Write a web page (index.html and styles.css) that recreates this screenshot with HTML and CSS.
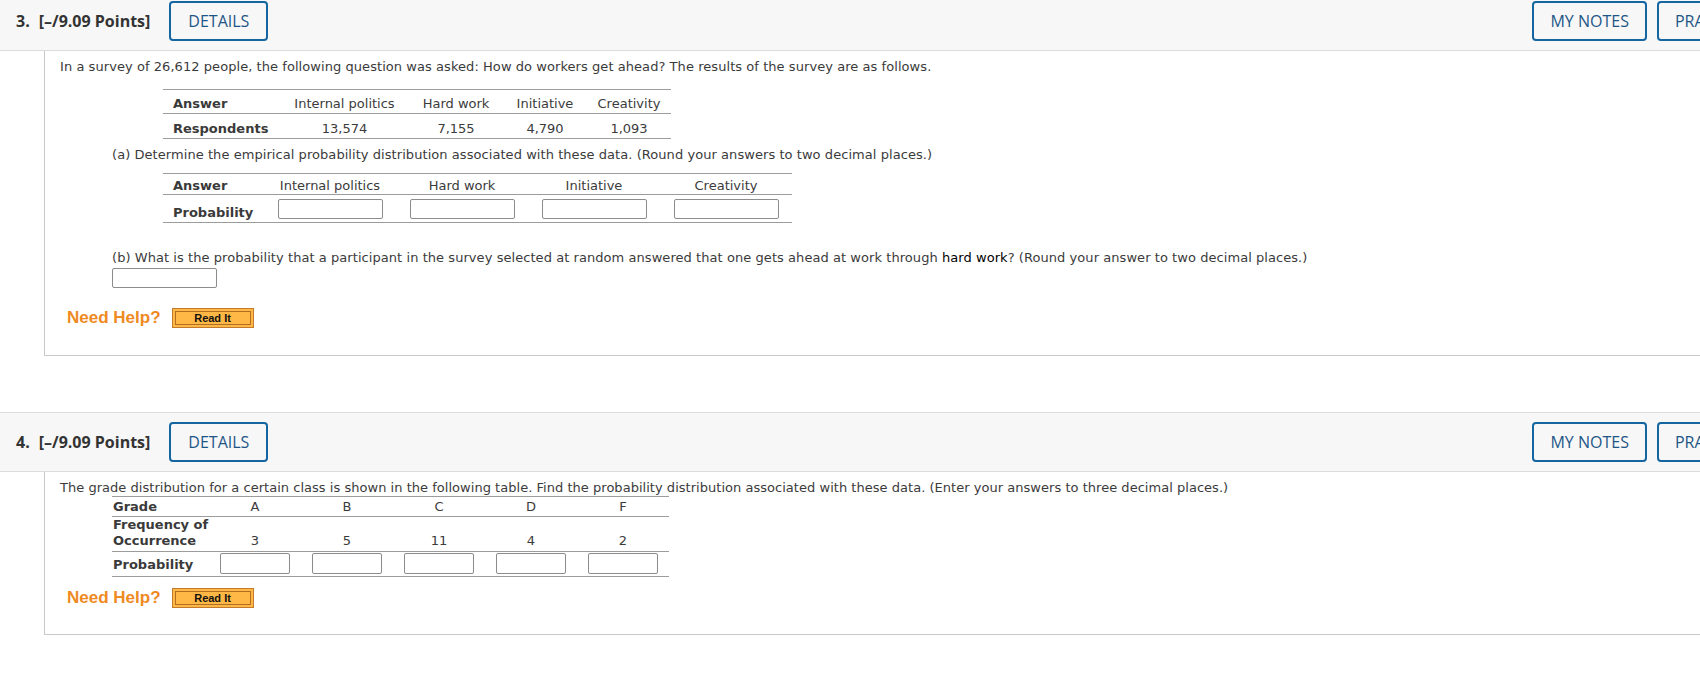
FILE: index.html
```html
<!DOCTYPE html>
<html lang="en">
<head>
<meta charset="utf-8">
<title>Questions</title>
<link rel="stylesheet" href="styles.css">
</head>
<body>
<div class="page">
  <section class="q">
    <div class="qhead first">
      <span class="qnum">3.</span><span class="qpts">[–/9.09 Points]</span>
      <button class="hbtn">DETAILS</button>
      <div class="hright">
        <button class="hbtn">MY NOTES</button>
        <button class="hbtn">PRACTICE ANOTHER</button>
      </div>
    </div>
    <div class="qbody qb1">
      <p class="lead">In a survey of 26,612 people, the following question was asked: How do workers get ahead? The results of the survey are as follows.</p>
      <table class="grid t1">
        <colgroup><col class="w117"><col class="w129"><col class="w94"><col class="w84"><col class="w84"></colgroup>
        <tr class="r1"><td class="lbl">Answer</td><td>Internal politics</td><td>Hard work</td><td>Initiative</td><td class="last">Creativity</td></tr>
        <tr class="r2"><td class="lbl">Respondents</td><td>13,574</td><td>7,155</td><td>4,790</td><td class="last">1,093</td></tr>
      </table>
      <p class="part pa">(a) Determine the empirical probability distribution associated with these data. (Round your answers to two decimal places.)</p>
      <table class="grid t2">
        <colgroup><col class="w101"><col class="w132"><col class="w132"><col class="w132"><col class="w132"></colgroup>
        <tr class="r1"><td class="lbl">Answer</td><td>Internal politics</td><td>Hard work</td><td>Initiative</td><td>Creativity</td></tr>
        <tr class="r2"><td class="lbl">Probability</td><td class="inp"><input class="ans"></td><td class="inp"><input class="ans"></td><td class="inp"><input class="ans"></td><td class="inp"><input class="ans"></td></tr>
      </table>
      <p class="part pb">(b) What is the probability that a participant in the survey selected at random answered that one gets ahead at work through <span class="hl">hard work</span>? (Round your answer to two decimal places.)</p>
      <input class="ans ansb">
      <div class="help h1"><span class="needhelp">Need Help?</span><button class="readit">Read It</button></div>
    </div>
  </section>

  <section class="q">
    <div class="qhead">
      <span class="qnum">4.</span><span class="qpts">[–/9.09 Points]</span>
      <button class="hbtn">DETAILS</button>
      <div class="hright">
        <button class="hbtn">MY NOTES</button>
        <button class="hbtn">PRACTICE ANOTHER</button>
      </div>
    </div>
    <div class="qbody qb2">
      <p class="lead">The grade distribution for a certain class is shown in the following table. Find the probability distribution associated with these data. (Enter your answers to three decimal places.)</p>
      <table class="grid t3">
        <colgroup><col class="w97"><col class="w92"><col class="w92"><col class="w92"><col class="w92"><col class="w92"></colgroup>
        <tr class="r1"><td class="lbl">Grade</td><td>A</td><td>B</td><td>C</td><td>D</td><td>F</td></tr>
        <tr class="r2"><td class="lbl">Frequency of<br>Occurrence</td><td>3</td><td>5</td><td>11</td><td>4</td><td>2</td></tr>
        <tr class="r3"><td class="lbl">Probability</td><td class="inp"><input class="ans sm"></td><td class="inp"><input class="ans sm"></td><td class="inp"><input class="ans sm"></td><td class="inp"><input class="ans sm"></td><td class="inp"><input class="ans sm"></td></tr>
      </table>
      <div class="help h2"><span class="needhelp">Need Help?</span><button class="readit">Read It</button></div>
    </div>
  </section>
</div>
</body>
</html>
```

FILE: styles.css
```css
html, body {
  margin: 0;
  padding: 0;
}
body {
  overflow: hidden;
  background: #ffffff;
  font-family: "DejaVu Sans", Verdana, sans-serif;
  font-size: 13px;
  line-height: 16px;
  color: #3b3b3b;
}
.page {
  width: 1853px;
}
p {
  margin: 0;
}
.lead,
.part {
  letter-spacing: 0.06px;
}
.qb2 .lead {
  letter-spacing: 0.03px;
}

/* question header */
.qhead {
  display: flex;
  align-items: center;
  background: #f7f7f7;
  border-top: 1px solid #dcdcdc;
  border-bottom: 1px solid #dcdcdc;
  padding: 9px 10px 9px 16px;
  font-family: "Open Sans", sans-serif;
}
.qhead.first {
  border-top: 0;
  padding-top: 1px;
}
.qnum,
.qpts {
  font-weight: 700;
  font-size: 16px;
  color: #333333;
  line-height: 20px;
}
.qnum {
  margin-right: 9px;
}
.qpts {
  margin-right: 19px;
}
.hbtn {
  height: 40px;
  box-sizing: border-box;
  border: 2px solid #1565a0;
  border-radius: 4px;
  background: transparent;
  color: #1d5686;
  font-family: "Open Sans", sans-serif;
  font-size: 16px;
  padding: 0 17px;
  white-space: nowrap;
}
.hright {
  margin-left: auto;
  display: flex;
  gap: 10px;
}
.hright .hbtn {
  padding: 0 16px;
}

/* question body */
.q + .q {
  margin-top: 56px;
}
.qbody {
  margin-left: 44px;
  border-left: 1px solid #c9c9c9;
  border-bottom: 1px solid #c9c9c9;
  padding: 8px 0 27px 15px;
}
.qb2 {
  padding-bottom: 26px;
}
.hl {
  color: #000000;
}

/* tables */
.grid {
  border-collapse: separate;
  border-spacing: 0;
  table-layout: fixed;
  border-top: 1px solid #9c9c9c;
}
.grid td {
  border-bottom: 1px solid #9c9c9c;
  padding: 0;
  text-align: center;
  vertical-align: bottom;
  white-space: nowrap;
}
.grid td.lbl {
  text-align: left;
  font-weight: 700;
  color: #3a3a3a;
}
.w117 { width: 117px; }
.w129 { width: 129px; }
.w94 { width: 94px; }
.w84 { width: 84px; }
.w101 { width: 101px; }
.w132 { width: 132px; }
.w97 { width: 97px; }
.w92 { width: 92px; }

.t1 {
  width: 508px;
  margin: 14px 0 0 103px;
}
.t1 td.lbl { padding-left: 10px; }
.t1 .r1 td { padding-top: 6px; padding-bottom: 1px; }
.t1 .r2 td { padding-top: 7px; padding-bottom: 1px; }

.t2 {
  width: 629px;
  margin: 10px 0 0 103px;
}
.t2 td.lbl { padding-left: 10px; }
.t2 .r1 td { padding-top: 4px; padding-bottom: 0; }
.t2 .r2 td { padding-top: 10px; padding-bottom: 1px; }
.t2 .r2 td.inp { padding-top: 4px; padding-bottom: 3px; }

.t3 {
  width: 557px;
  margin: 0 0 0 52px;
}
.t3 td.lbl { padding-left: 1px; }
.t3 .r1 td { padding-top: 2px; padding-bottom: 1px; }
.t3 .r2 td { padding-top: 0; padding-bottom: 2px; }
.t3 .r3 td { padding-top: 5px; padding-bottom: 3px; }
.t3 .r3 td.inp { padding-top: 1px; padding-bottom: 2px; }

.ans {
  display: block;
  box-sizing: border-box;
  width: 105px;
  height: 20px;
  margin: 0 auto;
  padding: 0;
  border: 1px solid #8c8c8c;
  border-radius: 2px;
  background: #ffffff;
}
.ans.sm {
  width: 70px;
  height: 21px;
}
.ans.ansb {
  margin: 2px 0 0 52px;
}

.part {
  margin-left: 52px;
}
.pa { margin-top: 8px; }
.pb { margin-top: 27px; }

/* help row */
.help {
  display: flex;
  align-items: center;
  gap: 11px;
  margin-left: 7px;
}
.h1 { margin-top: 20px; }
.h2 { margin-top: 11px; }
.needhelp {
  font-family: "Liberation Sans", Arial, sans-serif;
  font-weight: 700;
  font-size: 17px;
  line-height: 20px;
  color: #ee8a1f;
}
.readit {
  width: 82px;
  height: 20px;
  box-sizing: border-box;
  border: 1px solid #c47a2c;
  background: #ffb845;
  box-shadow: inset 0 0 0 2px #ffb845, inset 0 0 0 3px #b26c24;
  font-family: "Liberation Sans", Arial, sans-serif;
  font-weight: 700;
  font-size: 11px;
  color: #111111;
  padding: 0;
  line-height: 16px;
}
```
